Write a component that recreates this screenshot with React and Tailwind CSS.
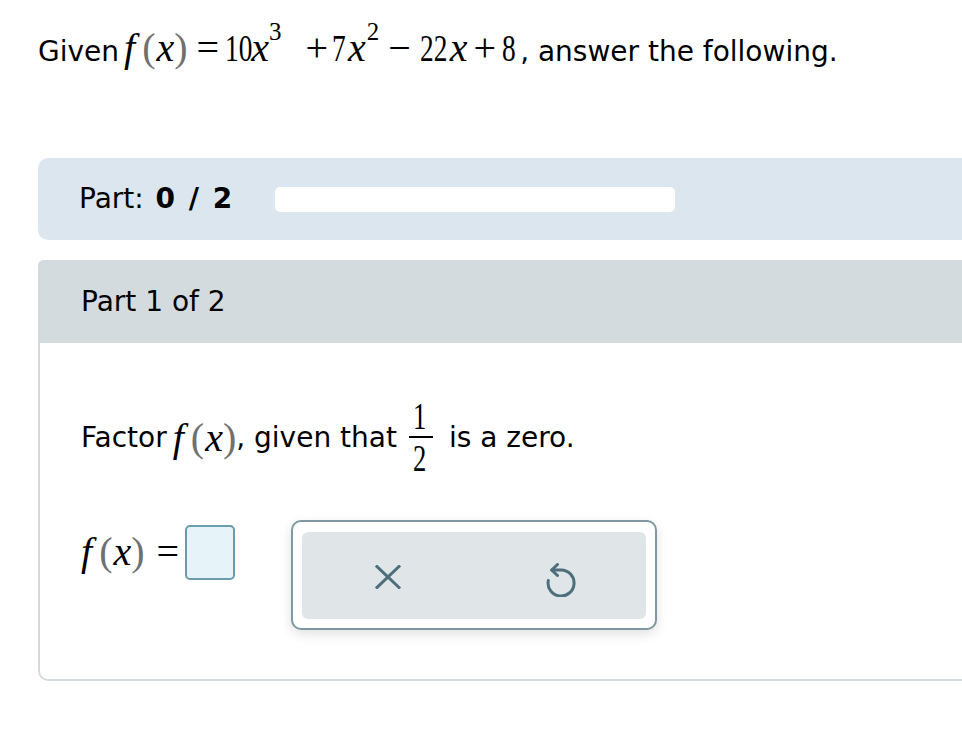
import React from "react";

const sans = { fontFamily: '"DejaVu Sans", Verdana, sans-serif' };
const serif = { fontFamily: '"Liberation Serif", "Times New Roman", serif' };

// digits in the reference are set in a narrow serif, so squeeze them a little
function Num({ children, box, size = "text-[38px]" }) {
  return (
    <span className={`inline-block ${box}`}>
      <span className={`inline-block origin-left scale-x-[0.72] ${size}`}>{children}</span>
    </span>
  );
}

function Sup({ children, className = "" }) {
  return <span className={`inline-block text-[25px] relative -top-[21px] ${className}`}>{children}</span>;
}

function Paren({ children }) {
  return <span className="text-[#707070]">{children}</span>;
}

function Fx({ className = "" }) {
  return (
    <span className={`text-[40px] leading-none ${className}`} style={serif}>
      <i>f</i>
      <span className="ml-[7px]"><Paren>(</Paren></span>
      <i className="ml-[1px]">x</i>
      <Paren>)</Paren>
    </span>
  );
}

function UndoIcon() {
  return (
    <svg width="30" height="34" viewBox="0 0 30 34" fill="none" stroke="#4d6f7c" strokeWidth="3" strokeLinecap="round" strokeLinejoin="round">
      <path d="M11.5 1.5 L5.7 7 L11.5 12.5" />
      <path d="M5.7 7 H15 A13 13 0 1 1 2.3 17.5" />
    </svg>
  );
}

function XIcon() {
  return (
    <svg width="26" height="24" viewBox="0 0 26 24" fill="none" stroke="#4d6f7c" strokeWidth="3" strokeLinecap="square">
      <path d="M2 1.5 L24 22.5 M24 1.5 L2 22.5" />
    </svg>
  );
}

export default function App() {
  return (
    <div className="w-[962px] h-[738px] bg-white text-[28px] text-black overflow-hidden" style={sans}>
      <div className="pl-[38px] pt-[28px] h-[72px] flex items-baseline whitespace-nowrap">
        <span>Given</span>
        <Fx className="ml-[5px]" />
        <span className="text-[40px] leading-none" style={serif}>
          <span className="ml-[9px]">=</span>
          <Num box="ml-[6px] w-[26px]">10</Num>
          <i>x</i>
          <Sup>3</Sup>
          <span className="ml-[24px]">+</span>
          <Num box="ml-[4px] w-[14px]">7</Num>
          <i className="ml-[2px]">x</i>
          <Sup className="ml-[1px]">2</Sup>
          <span className="ml-[9px]">−</span>
          <Num box="ml-[9px] w-[28px]">22</Num>
          <i className="ml-[2px]">x</i>
          <span className="ml-[6px]">+</span>
          <Num box="ml-[6px] w-[15px]">8</Num>
        </span>
        <span className="ml-[3px]">, answer the following.</span>
      </div>

      <div className="ml-[38px] mt-[86px] h-[82px] bg-[#dce6ee] rounded-l-[10px] flex items-center pl-[41px]">
        <span>Part: <b className="ml-[3px] tracking-[2px]">0 / 2</b></span>
        <div className="ml-[41px] w-[400px] h-[25px] bg-white rounded-[5px]" />
      </div>

      <div className="ml-[38px] mt-[20px] h-[421px] border-2 border-r-0 border-[#d3dbdf] rounded-tl-[6px] rounded-bl-[10px] flex flex-col">
        <div className="h-[83px] -mt-[2px] -ml-[2px] bg-[#d3dbdf] rounded-tl-[6px] flex items-center pl-[43px]">
          <span>Part 1 of 2</span>
        </div>
        <div className="pl-[41px] pt-[53px]">
          <div className="flex items-center whitespace-nowrap h-[84px]">
            <span>Factor</span>
            <Fx className="ml-[6px]" />
            <span>, given that</span>
            <span className="inline-flex flex-col items-center ml-[12px] mr-[16px]" style={serif}>
              <Num box="w-[15px] h-[36px] leading-[36px]" size="text-[37px]">1</Num>
              <span className="w-[24px] h-[2px] bg-black mt-[1px] mb-[3px]" />
              <Num box="w-[15px] h-[36px] leading-[36px]" size="text-[37px]">2</Num>
            </span>
            <span>is a zero.</span>
          </div>

          <div className="mt-[40px] flex items-start">
            <div className="flex items-center h-[56px] mt-[4px]">
              <Fx />
              <span className="ml-[12px] text-[40px] leading-none" style={serif}>=</span>
              <div className="ml-[6px] w-[50px] h-[55px] border-2 border-[#6b9ca9] bg-[#e6f3f8] rounded-[5px]" />
            </div>
            <div className="ml-[56px] w-[366px] h-[110px] border-2 border-[#7f98a1] rounded-[10px] bg-white pl-[9px] pr-[9px] pt-[10px] pb-[9px] shadow-[0_4px_12px_rgba(0,0,0,0.12)]">
              <div className="w-full h-full bg-[#e0e5e8] rounded-[6px] flex items-center">
                <div className="flex-1 flex justify-center pt-[2px]"><XIcon /></div>
                <div className="flex-1 flex justify-center pt-[8px] pl-[2px]"><UndoIcon /></div>
              </div>
            </div>
          </div>
        </div>
      </div>
    </div>
  );
}
